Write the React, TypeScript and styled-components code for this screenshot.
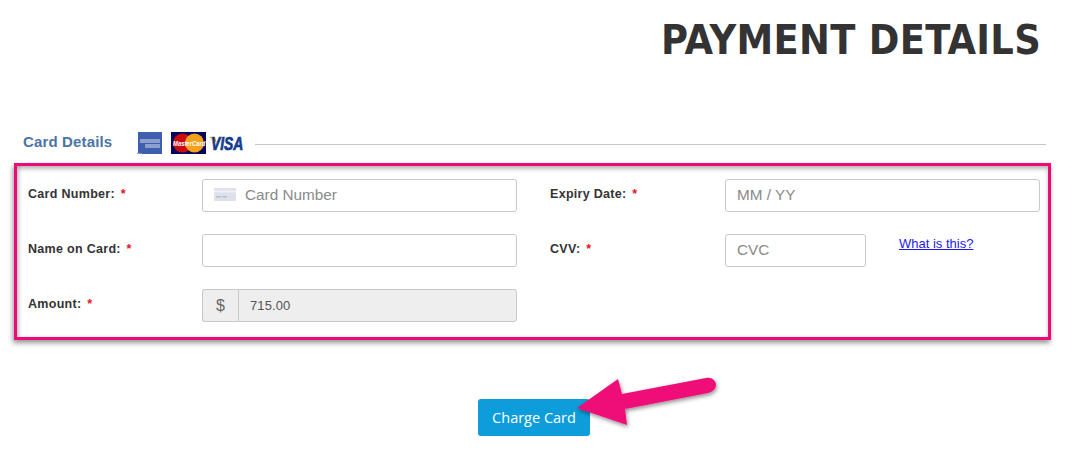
import React from "react";
import styled, { createGlobalStyle } from "styled-components";

const Global = createGlobalStyle`
  html, body { margin: 0; padding: 0; background: #fff; }
  body { font-family: "Liberation Sans", Arial, sans-serif; }
  * { box-sizing: border-box; }
`;

const Page = styled.div`
  position: relative;
  width: 1065px;
  height: 449px;
  overflow: hidden;
  background: #fff;
`;

const Title = styled.h1`
  margin: 0;
  height: 132px;
  padding: 17px 24px 0 0;
  text-align: right;
  font: bold 41px/46px "DejaVu Sans Condensed", "DejaVu Sans", Tahoma, sans-serif;
  letter-spacing: 0.3px;
  color: #333;
`;

const Legend = styled.div`
  display: flex;
  align-items: center;
  height: 22px;
  margin: 0 19px 0 23px;
`;

const LegendText = styled.span`
  font-size: 15px;
  font-weight: bold;
  letter-spacing: 0.15px;
  color: #4a74a5;
  width: 114px;
  margin-bottom: 3px;
`;

const Logos = styled.div`
  display: flex;
  align-items: center;
  width: 118px;
`;

const Rule = styled.div`
  flex: 1;
  height: 1px;
  margin-top: 2px;
  background: #c8c8c8;
`;

const Box = styled.section`
  margin: 9px 14px 0 14px;
  height: 177px;
  border: 3px solid #ef0a78;
  box-shadow: -1px 3px 5px rgba(0, 0, 0, 0.42), inset 0 3px 4px rgba(0, 0, 0, 0.26), inset 3px 0 3px rgba(0, 0, 0, 0.1);
  padding: 13px 0 0 11px;
`;

const Grid = styled.div`
  display: grid;
  grid-template-columns: 174px 315px 33px 175px 315px;
  grid-auto-rows: 33px;
  row-gap: 22px;
`;

const Label = styled.label<{ $col: number }>`
  grid-column: ${(p) => p.$col};
  font-size: 12.5px;
  font-weight: bold;
  letter-spacing: 0.3px;
  line-height: 30px;
  color: #333;
`;

const Star = styled.span`
  color: #e8141c;
  margin-left: 2px;
`;

const Field = styled.div<{ $col: number }>`
  grid-column: ${(p) => p.$col};
  display: flex;
  align-items: center;
  height: 33px;
  padding: 0 0 2px 11px;
  border: 1px solid #c8c8c8;
  border-radius: 3px;
  background: #fff;
`;

const Placeholder = styled.span`
  font-size: 15.3px;
  color: #8a8a8a;
`;

const CvcRow = styled.div`
  grid-column: 5;
  display: flex;
  gap: 33px;
  align-items: flex-start;
`;

const CvcField = styled(Field)`
  width: 141px;
  flex: none;
`;

const Link = styled.a`
  font-size: 13px;
  line-height: 20px;
  color: #1a1aee;
  text-decoration: underline;
`;

const AmountGroup = styled.div`
  grid-column: 2;
  display: flex;
  height: 33px;
`;

const Addon = styled.div`
  width: 36px;
  display: flex;
  align-items: center;
  justify-content: center;
  font-size: 16px;
  color: #666;
  background: #eee;
  border: 1px solid #c8c8c8;
  border-right: 0;
  border-radius: 3px 0 0 3px;
`;

const AmountInput = styled.div`
  flex: 1;
  display: flex;
  align-items: center;
  padding-left: 11px;
  font-size: 13px;
  letter-spacing: 0.1px;
  color: #555;
  background: #eee;
  border: 1px solid #c8c8c8;
  border-radius: 0 3px 3px 0;
`;

const Actions = styled.div`
  display: flex;
  justify-content: flex-start;
  padding: 59px 0 0 478px;
`;

const Button = styled.button`
  width: 112px;
  height: 37px;
  padding: 0;
  border: 0;
  border-radius: 3px;
  background: #0d9ddb;
  color: #fff;
  font: 14.5px "Open Sans", sans-serif;
`;

const ArrowLayer = styled.svg`
  position: absolute;
  left: 560px;
  top: 365px;
  overflow: visible;
`;

const CardGlyph = () => (
  <svg width="22" height="13" viewBox="0 0 22 13" style={{ marginRight: 9 }}>
    <rect width="22" height="13" rx="1" fill="#dde1ea" />
    <rect y="2.5" width="22" height="2" fill="#eef0f5" />
    <rect x="2" y="8" width="5" height="1.5" fill="#b9bfcc" />
    <rect x="8" y="8" width="5" height="1.5" fill="#b9bfcc" />
  </svg>
);

const Amex = () => (
  <svg width="25" height="22" viewBox="0 0 25 22">
    <rect x="1" width="24" height="22" fill="#3d5fae" />
    <rect x="3" y="7" width="20" height="4" fill="#8d9fd0" />
    <rect x="8" y="12" width="15" height="4" fill="#8d9fd0" />
    <rect x="0" y="21" width="5" height="1" fill="#8d9fd0" />
  </svg>
);

const MasterCard = () => (
  <svg width="35" height="22" viewBox="0 0 35 22" style={{ marginLeft: 9 }}>
    <rect width="35" height="22" fill="#04045e" />
    <circle cx="11.5" cy="11" r="9.5" fill="#cc0a10" />
    <circle cx="23.5" cy="11" r="9.5" fill="#f5a01a" />
    <text transform="translate(2 13.5) scale(0.84 1)" fontSize="7" fontStyle="italic" fontWeight="bold" fontFamily="Liberation Sans" fill="#fff">MasterCard</text>
  </svg>
);

const Visa = () => (
  <svg width="36" height="22" viewBox="0 0 36 22" style={{ marginLeft: 3 }}>
    <path d="M0 5h6l2 6z" fill="#f0a81e" />
    <text transform="translate(2 18) scale(0.77 1)" fontSize="18" fontStyle="italic" fontWeight="bold" fontFamily="Liberation Sans" fill="#143c8c" stroke="#143c8c" strokeWidth="0.7">VISA</text>
  </svg>
);

export default function App() {
  return (
    <Page>
      <Global />
      <Title>PAYMENT DETAILS</Title>
      <Legend>
        <LegendText>Card Details</LegendText>
        <Logos>
          <Amex />
          <MasterCard />
          <Visa />
        </Logos>
        <Rule />
      </Legend>
      <Box>
        <Grid>
          <Label $col={1}>Card Number: <Star>*</Star></Label>
          <Field $col={2}><CardGlyph /><Placeholder>Card Number</Placeholder></Field>
          <Label $col={4}>Expiry Date: <Star>*</Star></Label>
          <Field $col={5}><Placeholder>MM / YY</Placeholder></Field>

          <Label $col={1}>Name on Card: <Star>*</Star></Label>
          <Field $col={2} />
          <Label $col={4}>CVV: <Star>*</Star></Label>
          <CvcRow>
            <CvcField $col={5}><Placeholder>CVC</Placeholder></CvcField>
            <Link href="#">What is this?</Link>
          </CvcRow>

          <Label $col={1}>Amount: <Star>*</Star></Label>
          <AmountGroup>
            <Addon>$</Addon>
            <AmountInput>715.00</AmountInput>
          </AmountGroup>
        </Grid>
      </Box>
      <Actions>
        <Button>Charge Card</Button>
      </Actions>
      <ArrowLayer width="160" height="70" viewBox="0 0 160 70">
        <defs>
          <filter id="arrowShadow" x="-20%" y="-20%" width="140%" height="150%">
            <feDropShadow dx="1" dy="2" stdDeviation="2" floodColor="#000" floodOpacity="0.45" />
          </filter>
        </defs>
        <path
          d="M17 43 L58 14 L62 29 L146 13 C152 12 156 16 156 20 C156 24 152 27 148 28 L65 44 L67 60 Z"
          fill="#ef0a78"
          filter="url(#arrowShadow)"
        />
      </ArrowLayer>
    </Page>
  );
}
